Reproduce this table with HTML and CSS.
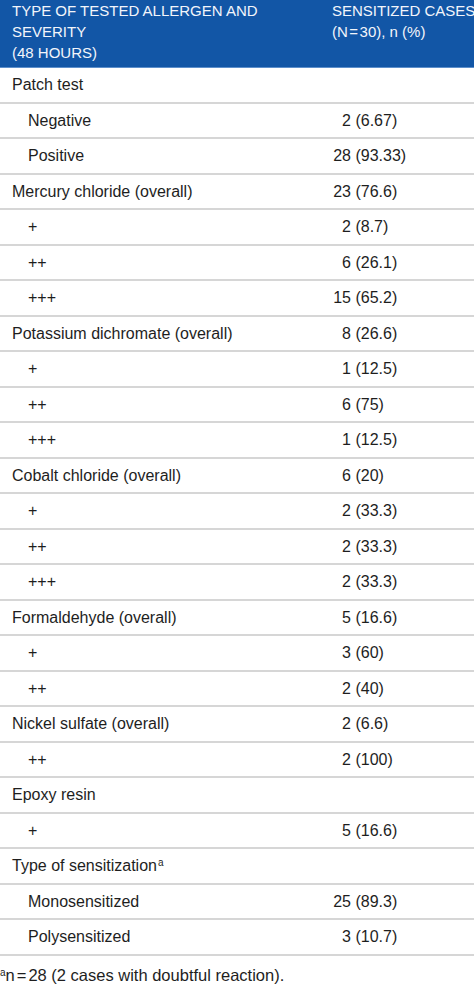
FILE: index.html
```html
<!DOCTYPE html>
<html>
<head>
<meta charset="utf-8">
<link rel="stylesheet" href="styles.css">
</head>
<body>
<div class="table">
  <div class="head">
    <div class="hcell">TYPE OF TESTED ALLERGEN AND<br>SEVERITY<br>(48 HOURS)</div>
    <div class="hcell right">SENSITIZED CASES<br>(N<span class="eq">=</span>30), n (%)</div>
  </div>
  <div class="row"><div class="label">Patch test</div><div class="val"></div></div>
  <div class="row"><div class="label sub">Negative</div><div class="val"><span class="n">2</span> (6.67)</div></div>
  <div class="row"><div class="label sub">Positive</div><div class="val"><span class="n">28</span> (93.33)</div></div>
  <div class="row"><div class="label">Mercury chloride (overall)</div><div class="val"><span class="n">23</span> (76.6)</div></div>
  <div class="row"><div class="label sub">+</div><div class="val"><span class="n">2</span> (8.7)</div></div>
  <div class="row"><div class="label sub">++</div><div class="val"><span class="n">6</span> (26.1)</div></div>
  <div class="row"><div class="label sub">+++</div><div class="val"><span class="n">15</span> (65.2)</div></div>
  <div class="row"><div class="label">Potassium dichromate (overall)</div><div class="val"><span class="n">8</span> (26.6)</div></div>
  <div class="row"><div class="label sub">+</div><div class="val"><span class="n">1</span> (12.5)</div></div>
  <div class="row"><div class="label sub">++</div><div class="val"><span class="n">6</span> (75)</div></div>
  <div class="row"><div class="label sub">+++</div><div class="val"><span class="n">1</span> (12.5)</div></div>
  <div class="row"><div class="label">Cobalt chloride (overall)</div><div class="val"><span class="n">6</span> (20)</div></div>
  <div class="row"><div class="label sub">+</div><div class="val"><span class="n">2</span> (33.3)</div></div>
  <div class="row"><div class="label sub">++</div><div class="val"><span class="n">2</span> (33.3)</div></div>
  <div class="row"><div class="label sub">+++</div><div class="val"><span class="n">2</span> (33.3)</div></div>
  <div class="row"><div class="label">Formaldehyde (overall)</div><div class="val"><span class="n">5</span> (16.6)</div></div>
  <div class="row"><div class="label sub">+</div><div class="val"><span class="n">3</span> (60)</div></div>
  <div class="row"><div class="label sub">++</div><div class="val"><span class="n">2</span> (40)</div></div>
  <div class="row"><div class="label">Nickel sulfate (overall)</div><div class="val"><span class="n">2</span> (6.6)</div></div>
  <div class="row"><div class="label sub">++</div><div class="val"><span class="n">2</span> (100)</div></div>
  <div class="row"><div class="label">Epoxy resin</div><div class="val"></div></div>
  <div class="row"><div class="label sub">+</div><div class="val"><span class="n">5</span> (16.6)</div></div>
  <div class="row"><div class="label">Type of sensitization<sup class="sup">a</sup></div><div class="val"></div></div>
  <div class="row"><div class="label sub">Monosensitized</div><div class="val"><span class="n">25</span> (89.3)</div></div>
  <div class="row"><div class="label sub">Polysensitized</div><div class="val"><span class="n">3</span> (10.7)</div></div>
</div>
<p class="foot"><sup class="fsup">a</sup>n<span class="feq">=</span>28 (2 cases with doubtful reaction).</p>
</body>
</html>
```
FILE: styles.css
```css
html, body {
  margin: 0;
  padding: 0;
  background: #ffffff;
  overflow: hidden;
}
body {
  width: 474px;
  font-family: "Liberation Sans", Arial, sans-serif;
  color: #1e1e1e;
}
.table {
  width: 474px;
}
.head {
  display: grid;
  grid-template-columns: 332px 1fr;
  background: #1256a6;
  color: #f2f5fb;
  font-size: 15px;
  line-height: 21px;
  height: 68px;
  box-sizing: border-box;
  border-bottom: 1px solid #5d8fcb;
  overflow: hidden;
}
.hcell {
  padding-left: 12px;
  white-space: nowrap;
}
.hcell.right {
  padding-left: 0;
}
.eq {
  padding: 0 1.5px;
}
.row {
  display: grid;
  grid-template-columns: 333px 1fr;
  align-items: center;
  height: 35.5px;
  box-sizing: border-box;
  border-bottom: 2px solid #d6d6d6;
  font-size: 16px;
  line-height: 20px;
}
.label {
  padding-left: 12px;
  padding-top: 1px;
  white-space: nowrap;
}
.label.sub {
  padding-left: 28px;
}
.val {
  white-space: pre;
  padding-top: 1px;
}
.n {
  display: inline-block;
  width: 18px;
  text-align: right;
}
.sup {
  font-size: 10px;
  vertical-align: 5px;
  line-height: 0;
  padding-left: 1px;
}
.foot {
  margin: 0;
  padding-top: 9px;
  font-size: 16.5px;
  line-height: 20px;
  white-space: nowrap;
}
.feq {
  padding: 0 2px;
}
.fsup {
  font-size: 10px;
  vertical-align: 5px;
  line-height: 0;
}
```
